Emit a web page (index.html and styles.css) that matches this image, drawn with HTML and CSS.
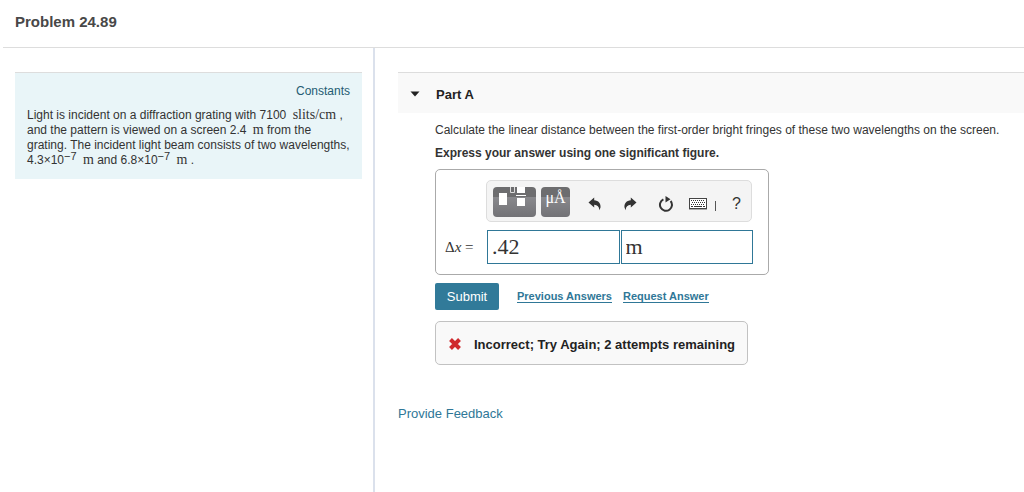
FILE: index.html
```html
<!DOCTYPE html>
<html lang="en">
<head>
    <meta charset="UTF-8">
    <meta name="viewport" content="width=device-width, initial-scale=1.0">
    <title>Problem 24.89</title>
    <link rel="stylesheet" href="styles.css">
</head>
<body>
    <header class="page-header">
        <h1>Problem 24.89</h1>
    </header>

    <div class="content">
        <aside class="sidebar">
            <div class="intro">
                <a href="#" class="constants">Constants</a>
                <p>Light is incident on a diffraction grating with 7100 <span class="unit">slits/cm</span> ,<br>
                and the pattern is viewed on a screen 2.4 <span class="unit">m</span> from the<br>
                grating. The incident light beam consists of two wavelengths,<br>
                4.3×10<sup>−7</sup> <span class="unit">m</span> and 6.8×10<sup>−7</sup> <span class="unit">m</span> .</p>
            </div>
        </aside>

        <main class="main">
            <div class="part-header">
                <svg class="arrow" width="10" height="6" viewBox="0 0 10 6"><path d="M0.5 0.5h9L5 5.5z" fill="#222"/></svg>
                <h2>Part A</h2>
            </div>

            <div class="part-body">
                <p class="question">Calculate the linear distance between the first-order bright fringes of these two wavelengths on the screen.</p>
                <p class="instructions">Express your answer using one significant figure.</p>

                <div class="answer-box">
                    <div class="toolbar">
                        <button type="button" class="tool tool-templates" aria-label="Templates">
                            <svg width="43" height="30" viewBox="0 0 43 30">
                                <path d="M6 6h8v12H6zM24 0h8v6h-8zM24 11h8v8h-8zM23 8h10v1H23z" fill="#fff"/>
                                <path d="M17.5 0v5.5h4V0" fill="none" stroke="#ddd"/>
                            </svg>
                        </button>
                        <button type="button" class="tool tool-symbols" aria-label="Symbols">μÅ</button>
                        <div class="actions">
                            <div class="history">
                                <button type="button" class="action" aria-label="Undo">
                                    <svg width="14" height="14" viewBox="0 0 14 14"><path d="M0.5 5.5L6.2 0.5v2.8c4.2 0.2 6.8 3.2 6.3 7.2l-1.1 2.7C11.1 9.6 9.5 7.9 6.2 7.8v2.8z" fill="#333"/></svg>
                                </button>
                                <button type="button" class="action" aria-label="Redo">
                                    <svg width="14" height="14" viewBox="0 0 14 14"><path d="M13.5 5.5L7.8 0.5v2.8C3.6 3.5 1 6.5 1.5 10.5l1.1 2.7C2.9 9.6 4.5 7.9 7.8 7.8v2.8z" fill="#333"/></svg>
                                </button>
                                <button type="button" class="action" aria-label="Reset">
                                    <svg width="16" height="16" viewBox="0 0 16 16"><path d="M5.4 3.4A6 6 0 1 0 12.6 5" fill="none" stroke="#333" stroke-width="2"/><path d="M7.5 0L12.5 3.2 7.5 6.5z" fill="#333"/></svg>
                                </button>
                            </div>
                            <div class="keyboard-group">
                                <button type="button" class="action" aria-label="Keyboard shortcuts">
                                    <svg width="18" height="12" viewBox="0 0 18 12">
                                        <rect x="0.5" y="0.5" width="17" height="10" fill="#fff" stroke="#444"/>
                                        <path d="M2 2.5h14M3 4.5h13M2 6.5h14" stroke="#333" stroke-dasharray="1 1"/>
                                        <path d="M2 8.5h2M5 8.5h8M14 8.5h2" stroke="#333"/>
                                        <path d="M0 11.5h18" stroke="#aaa"/>
                                    </svg>
                                </button>
                                <span class="divider"></span>
                                <button type="button" class="action help">?</button>
                            </div>
                        </div>
                    </div>

                    <div class="answer-row">
                        <label for="answerValue">Δ<i>x</i> =</label>
                        <input type="text" id="answerValue" value=".42">
                        <input type="text" id="answerUnits" value="m" aria-label="Units">
                    </div>
                </div>

                <div class="buttons">
                    <button type="submit" class="submit">Submit</button>
                    <a href="#">Previous Answers</a>
                    <a href="#">Request Answer</a>
                </div>

                <div class="feedback">
                    <svg width="14" height="14" viewBox="0 0 14 14"><path d="M2.5 2.5l9 9M11.5 2.5l-9 9" stroke="#cf2a2e" stroke-width="4"/></svg>
                    <span>Incorrect; Try Again; 2 attempts remaining</span>
                </div>
            </div>

            <a href="#" class="provide-feedback">Provide Feedback</a>
        </main>
    </div>
</body>
</html>
```

FILE: styles.css
```css
* {
    box-sizing: border-box;
}

body {
    margin: 0;
    min-height: 100vh;
    display: flex;
    flex-direction: column;
    background-color: #fff;
    color: #333;
    font-family: "Liberation Sans", Arial, sans-serif;
    font-size: 12px;
}

h1, h2, p {
    margin: 0;
}

a {
    color: #2f7797;
    text-decoration: none;
}

button, input {
    margin: 0;
    padding: 0;
    font-family: inherit;
}

.page-header {
    margin-left: 3px;
    padding: 12px;
    height: 48px;
    border-bottom: 1px solid #ddd;
}

.page-header h1 {
    font-size: 15px;
    line-height: 20px;
    color: #484848;
}

.content {
    flex: 1;
    display: flex;
}

/* left column */
.sidebar {
    flex: none;
    width: 375px;
    padding: 24px 11px 0 15px;
    border-right: 2px solid #dbe1ec;
}

.intro {
    padding: 9px 12px 11px;
    background-color: #e9f5f8;
    border-top: 1px solid #ddd;
}

.constants {
    display: block;
    line-height: 18px;
    text-align: right;
    color: #255c72;
}

.intro p {
    padding-top: 8px;
    line-height: 15px;
    white-space: nowrap;
}

.intro sup {
    font-size: 11px;
    line-height: 0;
    vertical-align: 4px;
}

.unit {
    margin-left: 3px;
    font-family: "Liberation Serif", "Times New Roman", serif;
    font-size: 14px;
    line-height: 0;
}

/* right column */
.main {
    flex: 1;
    padding: 24px 0 0 23px;
}

.part-header {
    display: flex;
    align-items: center;
    height: 41px;
    padding: 2px 12px 0;
    gap: 16px;
    border-top: 1px solid #ddd;
    background-color: #f9f9f9;
}

.part-header h2 {
    font-size: 13px;
    color: #222;
}

.part-body {
    padding: 10px 12px 0 37px;
}

.question {
    line-height: 14px;
}

.instructions {
    margin: 9px 0;
    line-height: 14px;
    font-weight: bold;
}

.answer-box {
    width: 334px;
    padding: 10px 15px 10px 9px;
    border: 1px solid #aaa;
    border-radius: 5px;
}

.toolbar {
    display: flex;
    align-items: center;
    gap: 5px;
    height: 42px;
    margin-left: 41px;
    padding: 2px 6px 0;
    width: 266px;
    background-color: #f4f4f4;
    border: 1px solid #ddd;
    border-radius: 5px;
}

.tool {
    height: 30px;
    border: none;
    border-radius: 4px;
    background: linear-gradient(#6d6d6f 0, #6d6d6f 10px, #89898d 10px, #727276 100%);
    color: #fff;
    overflow: hidden;
}

.tool svg,
.action svg {
    display: block;
}

.tool-templates {
    width: 43px;
}

.tool-symbols {
    width: 29px;
    padding-bottom: 8px;
    font-family: "Liberation Serif", serif;
    font-size: 16px;
    line-height: 22px;
}

.actions {
    flex: 1;
    display: flex;
    align-items: center;
    justify-content: space-between;
    padding: 4px 4px 0 13px;
}

.action {
    border: none;
    background: none;
    color: #333;
}

.history {
    display: flex;
    align-items: center;
    gap: 21px;
}

.keyboard-group {
    display: flex;
    align-items: center;
}

.divider {
    width: 1px;
    height: 10px;
    margin: 3px 16px 0 8px;
    background-color: #555;
}

.help {
    font-size: 16px;
    line-height: 18px;
}

.answer-row {
    display: flex;
    align-items: center;
    gap: 1px;
    margin-top: 8px;
}

.answer-row label {
    width: 41px;
    font-family: "Liberation Serif", serif;
    font-size: 15px;
}

.answer-row input {
    flex: 1;
    min-width: 0;
    height: 34px;
    padding: 0 4px;
    border: 1px solid #2f7797;
    border-radius: 0;
    color: #333;
    font-family: "Liberation Serif", serif;
    font-size: 22px;
}

.buttons {
    display: flex;
    align-items: center;
    gap: 11px;
    margin: 8px 0 11px;
}

.buttons a {
    font-size: 11px;
    font-weight: bold;
    line-height: 12px;
    border-bottom: 1px solid #2f7797;
}

.submit {
    width: 64px;
    height: 27px;
    margin-right: 7px;
    border: none;
    border-radius: 2px;
    background-color: #317a99;
    color: #fff;
    font-size: 13px;
}

.feedback {
    display: inline-flex;
    align-items: center;
    gap: 12px;
    height: 44px;
    padding: 2px 12px 0;
    border: 1px solid #c2c2c2;
    border-radius: 5px;
    background-color: #f9f9f9;
    color: #222;
    font-size: 13px;
    font-weight: bold;
}

.provide-feedback {
    display: inline-block;
    margin-top: 39px;
    font-size: 13px;
    line-height: 20px;
}
```
